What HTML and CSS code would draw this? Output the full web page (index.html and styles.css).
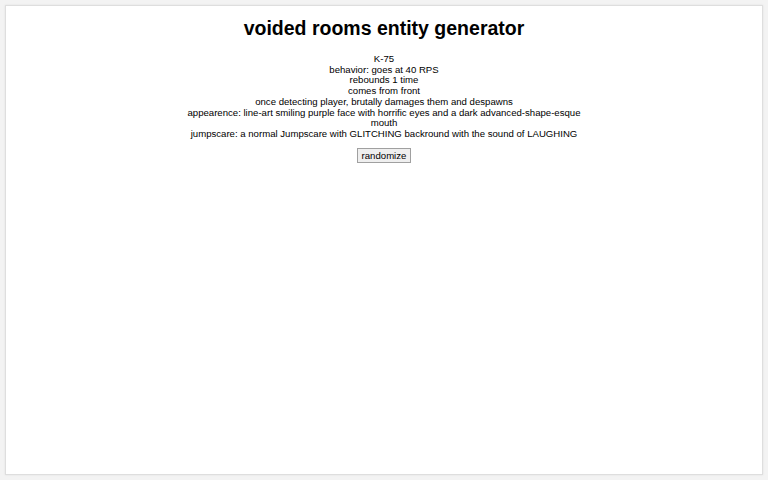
FILE: index.html
```html
<!DOCTYPE html>
<html lang="en">
<head>
    <meta charset="UTF-8">
    <meta name="viewport" content="width=device-width, initial-scale=1.0">
    <title>voided rooms entity generator</title>
    <link rel="stylesheet" href="styles.css">
</head>
<body>

    <div class="page">
        <h1>voided rooms entity generator</h1>

        <div class="entity" id="entity">
            <div id="name">K-75</div>
            <div id="behavior">behavior: goes at 40 RPS</div>
            <div id="rebounds">rebounds 1 time</div>
            <div id="direction">comes from front</div>
            <div id="action">once detecting player, brutally damages them and despawns</div>
            <div id="look">appearence: line-art smiling purple face with horrific eyes and a dark advanced-shape-esque mouth</div>
            <div id="jumpscare">jumpscare: a normal Jumpscare with GLITCHING backround with the sound of LAUGHING</div>
        </div>

        <button onclick="randomize()">randomize</button>
    </div>

    <script>
        // pick a random item out of a list
        function pick(list) {
            return list[Math.floor(Math.random() * list.length)];
        }

        function randomize() {
            const letters = "ABCDEFGHIJKLMNOPQRSTUVWXYZ";
            document.getElementById("name").innerText = pick(letters.split("")) + "-" + Math.floor(Math.random() * 100);
            document.getElementById("behavior").innerText = "behavior: goes at " + (10 + Math.floor(Math.random() * 60)) + " RPS";
            document.getElementById("rebounds").innerText = "rebounds " + Math.floor(Math.random() * 5) + " time";
            document.getElementById("direction").innerText = "comes from " + pick(["front", "behind", "above", "the left", "the right"]);
            document.getElementById("action").innerText = pick([
                "once detecting player, brutally damages them and despawns",
                "once detecting player, kills them instantly",
                "hides in lockers and waits"
            ]);
        }
    </script>

</body>
</html>
```

FILE: styles.css
```css
html, body {
    height: 100%;
}
body {
    margin: 0;
    padding: 5px;
    box-sizing: border-box;
    background-color: #f3f3f3;
    font-family: "Liberation Sans", Arial, sans-serif;
    color: #000;
}
.page {
    height: 100%;
    box-sizing: border-box;
    background-color: white;
    border: 1px solid #dedede;
    box-shadow: 0 0 2px rgba(0, 0, 0, 0.08);
    text-align: center;
    padding-top: 11px;
}
h1 {
    font-size: 19.5px;
    margin: 0 0 14px 0;
}
.entity {
    max-width: 400px;
    margin: 0 auto;
    font-size: 9.6px;
    line-height: 10.7px;
}
button {
    font-family: "Liberation Sans", Arial, sans-serif;
    font-size: 9.6px;
    margin-top: 8px;
    padding: 1px 4px;
    border: 1px solid #a0a0a0;
    background-color: #efefef;
    border-radius: 0;
}
```
